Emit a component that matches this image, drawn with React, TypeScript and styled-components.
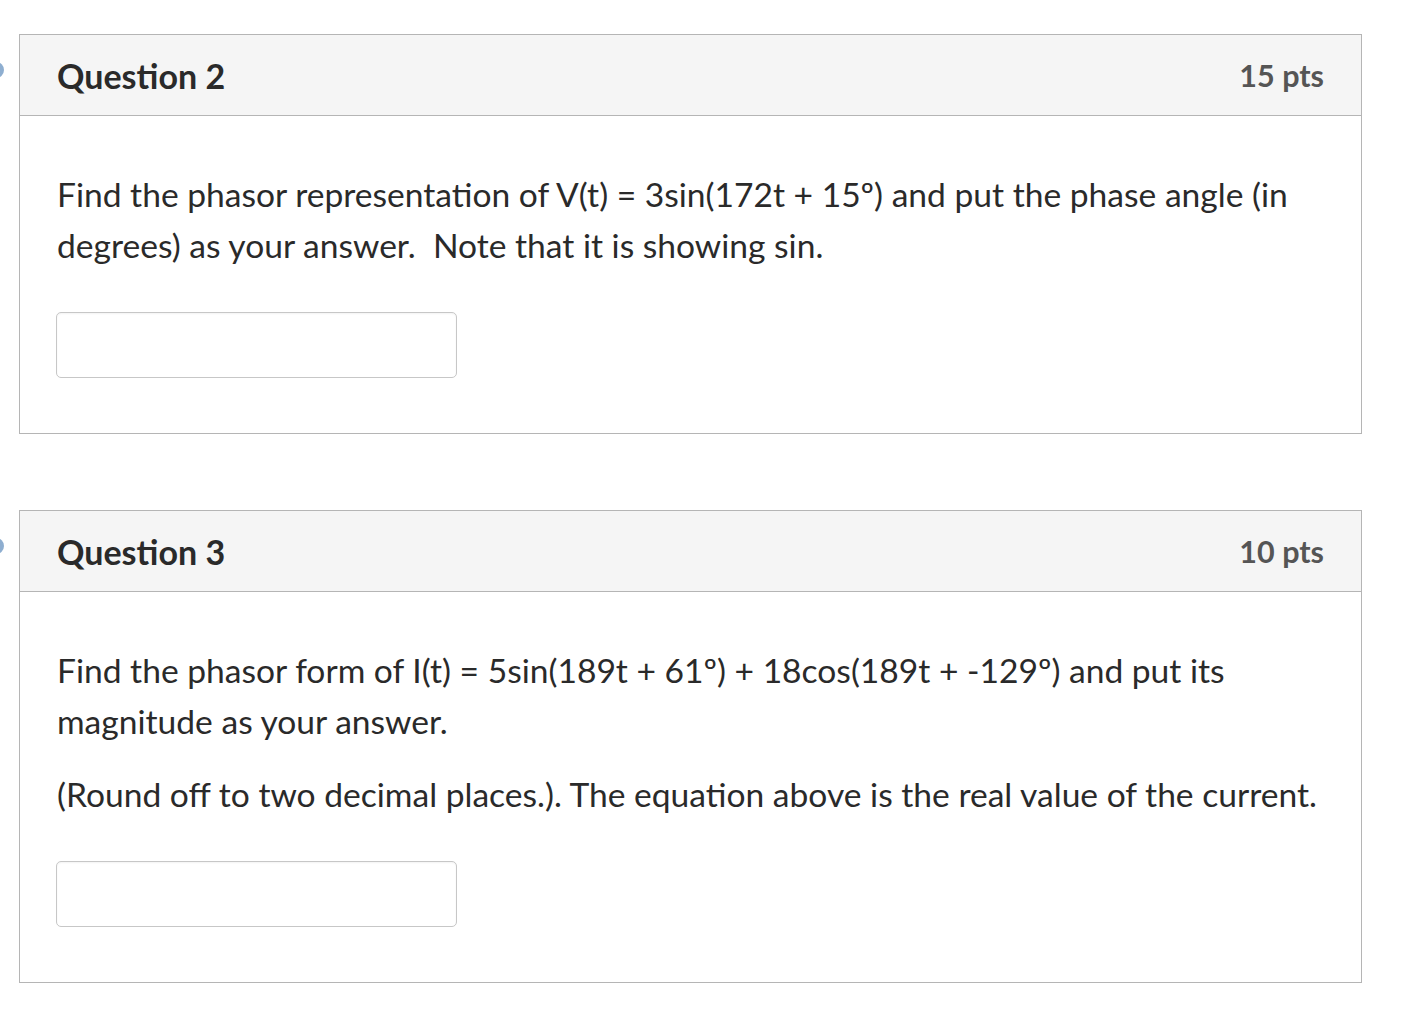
import styled, { createGlobalStyle } from "styled-components";

const GlobalStyle = createGlobalStyle`
  body {
    margin: 0;
    background: #ffffff;
    font-family: Lato, "Liberation Sans", sans-serif;
    color: #2d2d2d;
  }
`;

type Question = {
  title: string;
  points: string;
  paragraphs: string[];
};

const questions: Question[] = [
  {
    title: "Question 2",
    points: "15 pts",
    paragraphs: [
      "Find the phasor representation of V(t) = 3sin(172t + 15º) and put the phase angle (in degrees) as your answer.\u00a0 Note that it is showing sin.",
    ],
  },
  {
    title: "Question 3",
    points: "10 pts",
    paragraphs: [
      "Find the phasor form of I(t) = 5sin(189t + 61º) + 18cos(189t + -129º) and put its magnitude as your answer.",
      "(Round off to two decimal places.). The equation above is the real value of the current.",
    ],
  },
];

const App = () => {
  return (
    <>
      <GlobalStyle />
      <Page>
        {questions.map((q) => (
          <QuestionRow key={q.title}>
            <Marker />
            <Card>
              <Header>
                <Title>{q.title}</Title>
                <Points>{q.points}</Points>
              </Header>
              <Body>
                {q.paragraphs.map((p, i) => (
                  <Paragraph key={i}>{p}</Paragraph>
                ))}
                <AnswerInput type="text" />
              </Body>
            </Card>
          </QuestionRow>
        ))}
      </Page>
    </>
  );
};

const Page = styled.div`
  display: flex;
  flex-direction: column;
  gap: 76px;
  padding: 34px 0 0 19px;
  width: 1343px;
`;

const QuestionRow = styled.div`
  position: relative;
`;

const Marker = styled.span`
  position: absolute;
  left: -31px;
  top: 28px;
  width: 16px;
  height: 16px;
  border-radius: 50%;
  background: #8eaed0;
`;

const Card = styled.div`
  border: 1px solid #b5b5b5;
  background: #ffffff;
`;

const Header = styled.div`
  display: flex;
  align-items: center;
  justify-content: space-between;
  height: 80px;
  padding: 0 37px;
  background: #f5f5f5;
  border-bottom: 1px solid #b5b5b5;
`;

const Title = styled.h2`
  margin: 0;
  font-size: 34px;
  font-weight: 700;
  color: #2a2a2a;
`;

const Points = styled.span`
  font-size: 30.5px;
  font-weight: 700;
  color: #555555;
`;

const Body = styled.div`
  display: flex;
  flex-direction: column;
  align-items: flex-start;
  padding: 53px 37px 55px;
`;

const Paragraph = styled.p`
  margin: 0 0 22px;
  font-size: 33.6px;
  line-height: 51px;
  color: #2a2a2a;
`;

const AnswerInput = styled.input`
  box-sizing: border-box;
  width: 401px;
  height: 66px;
  margin: 19px 0 0 -1px;
  border: 1px solid #c7c7c7;
  border-radius: 5px;
  background: #ffffff;
  box-shadow: inset 0 1px 2px rgba(0, 0, 0, 0.05);
  font-size: 28px;
  padding: 0 16px;
  font-family: Lato, "Liberation Sans", sans-serif;
`;

export default App;
